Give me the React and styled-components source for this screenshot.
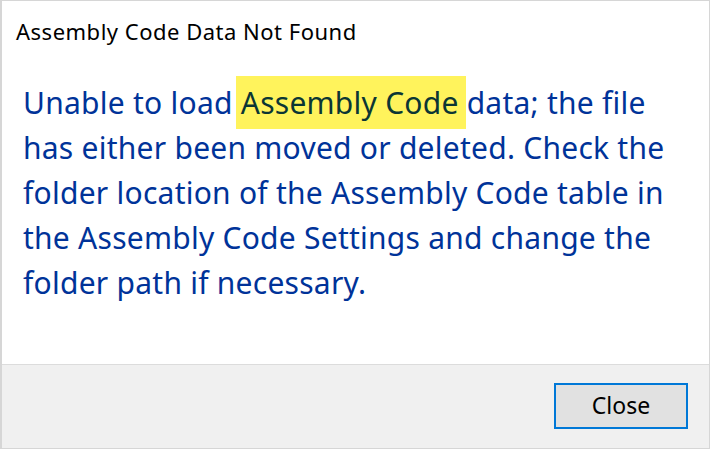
import React from "react";
import styled, { createGlobalStyle } from "styled-components";

const GlobalStyle = createGlobalStyle`
  html, body {
    margin: 0;
    padding: 0;
    background: #ffffff;
  }
`;

const Dialog = styled.div`
  box-sizing: border-box;
  width: 710px;
  height: 449px;
  border: 1px solid #d6d6d6;
  border-left-width: 2px;
  display: flex;
  flex-direction: column;
  font-family: "Noto Sans", "Open Sans", sans-serif;
  background: #ffffff;
`;

const Content = styled.div`
  flex: 1;
  display: flex;
  flex-direction: column;
`;

const Title = styled.div`
  padding: 15px 0 0 14px;
  font-size: 22px;
  letter-spacing: 0.5px;
  line-height: 30px;
  color: #000000;
`;

const Message = styled.div`
  margin: 34px 0 0 21px;
  font-size: 30px;
  letter-spacing: 0.25px;
  line-height: 45px;
  color: #003399;
  white-space: nowrap;
`;

const Highlight = styled.span`
  background: #fff35c;
  color: #0b3634;
  padding: 6px 7px 6px 5px;
  margin: 0 -7px 0 -5px;
`;

const Footer = styled.div`
  height: 84px;
  box-sizing: border-box;
  border-top: 1px solid #dcdcdc;
  background: #f0f0f0;
  display: flex;
  justify-content: flex-end;
  align-items: flex-start;
  padding: 18px 21px 0 0;
`;

const Button = styled.button`
  box-sizing: border-box;
  width: 134px;
  height: 46px;
  border: 2px solid #0078d7;
  background: #e1e1e1;
  font-family: "Noto Sans", "Open Sans", sans-serif;
  font-size: 23px;
  color: #000000;
  padding: 0 0 2px;
  cursor: pointer;
`;

export default function App() {
  return (
    <>
      <GlobalStyle />
      <Dialog>
        <Content>
          <Title>Assembly Code Data Not Found</Title>
          <Message>
            Unable to load <Highlight>Assembly Code</Highlight> data; the file
            <br />
            has either been moved or deleted. Check the
            <br />
            folder location of the Assembly Code table in
            <br />
            the Assembly Code Settings and change the
            <br />
            folder path if necessary.
          </Message>
        </Content>
        <Footer>
          <Button>Close</Button>
        </Footer>
      </Dialog>
    </>
  );
}
